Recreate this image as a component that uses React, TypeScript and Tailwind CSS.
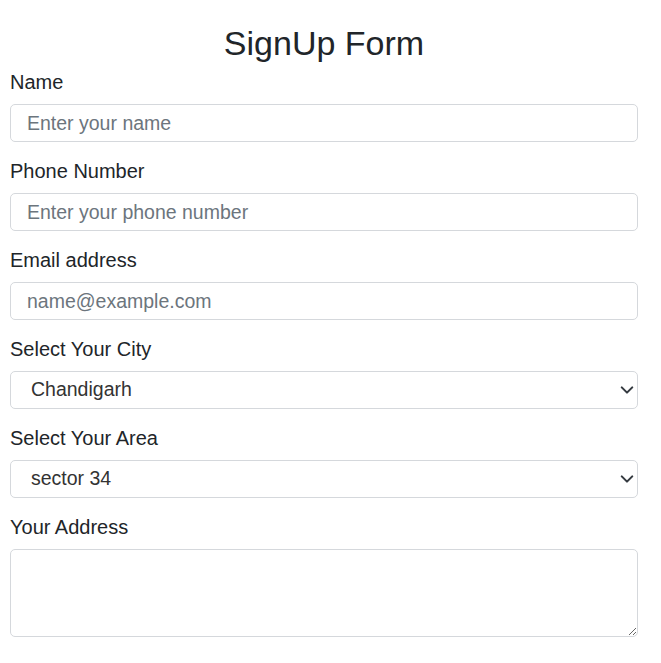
import React from "react";

const labelCls =
  "block text-[20px] leading-[24px] text-[#212529] mb-[10px]";
const inputCls =
  "block w-full h-[38px] rounded-[5px] border border-[#d5d8dc] bg-white px-[16px] text-[19.5px] text-[#212529] placeholder:text-[#6c757d] outline-none";

function Chevron() {
  return (
    <svg
      width="14"
      height="14"
      viewBox="0 0 16 16"
      className="pointer-events-none absolute right-[4px] top-[12px]"
      fill="none"
      stroke="#343a40"
      strokeWidth="2.4"
      strokeLinecap="round"
      strokeLinejoin="round"
    >
      <path d="m2 5 6 6 6-6" />
    </svg>
  );
}

function SelectField({ label, value }: { label: string; value: string }) {
  return (
    <div className="mb-[17px]">
      <label className={labelCls}>{label}</label>
      <div className="relative">
        <select
          defaultValue={value}
          className="block w-full h-[38px] appearance-none rounded-[5px] border border-[#d5d8dc] bg-white pl-[20px] pr-[30px] text-[19.5px] text-[#333] outline-none"
        >
          <option value={value}>{value}</option>
        </select>
        <Chevron />
      </div>
    </div>
  );
}

function InputField({
  label,
  placeholder,
  type = "text",
}: {
  label: string;
  placeholder: string;
  type?: string;
}) {
  return (
    <div className="mb-[17px]">
      <label className={labelCls}>{label}</label>
      <input type={type} placeholder={placeholder} className={inputCls} />
    </div>
  );
}

export default function App() {
  return (
    <div
      className="w-[661px] min-h-[663px] bg-white pl-[10px] pr-[23px] pt-[23px]"
      style={{ fontFamily: '"Liberation Sans", Arial, sans-serif' }}
    >
      <h1 className="text-center text-[34px] leading-[40px] text-[#212529] mb-[7px] font-normal">
        SignUp Form
      </h1>
      <InputField label="Name" placeholder="Enter your name" />
      <InputField label="Phone Number" placeholder="Enter your phone number" />
      <InputField
        label="Email address"
        placeholder="name@example.com"
        type="email"
      />
      <SelectField label="Select Your City" value="Chandigarh" />
      <SelectField label="Select Your Area" value="sector 34" />
      <div>
        <label className={labelCls}>Your Address</label>
        <textarea className="block w-full h-[88px] rounded-[5px] border border-[#d5d8dc] bg-white px-[16px] py-[6px] text-[19.5px] text-[#212529] outline-none" />
      </div>
    </div>
  );
}
